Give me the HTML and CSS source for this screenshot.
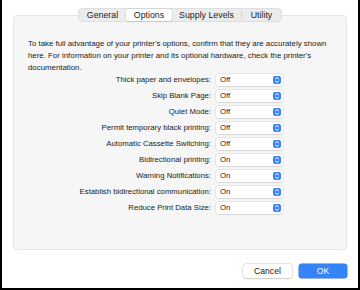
FILE: index.html
```html
<!DOCTYPE html>
<html>
<head>
<meta charset="utf-8">
<link rel="stylesheet" href="styles.css">
</head>
<body>
<div class="window">
  <div class="tabs">
    <div class="tab">General</div>
    <div class="tab active">Options</div>
    <div class="tab">Supply Levels</div>
    <div class="sep"></div>
    <div class="tab">Utility</div>
  </div>
  <div class="panel">
    <p class="intro">To take full advantage of your printer's options, confirm that they are accurately shown<br>here. For information on your printer and its optional hardware, check the printer's<br>documentation.</p>
    <div class="rows">
      <div class="label">Thick paper and envelopes:</div><div class="popup"><span>Off</span><i class="step"></i></div>
      <div class="label">Skip Blank Page:</div><div class="popup"><span>Off</span><i class="step"></i></div>
      <div class="label">Quiet Mode:</div><div class="popup"><span>Off</span><i class="step"></i></div>
      <div class="label">Permit temporary black printing:</div><div class="popup"><span>Off</span><i class="step"></i></div>
      <div class="label">Automatic Cassette Switching:</div><div class="popup"><span>Off</span><i class="step"></i></div>
      <div class="label">Bidirectional printing:</div><div class="popup"><span>On</span><i class="step"></i></div>
      <div class="label">Warning Notifications:</div><div class="popup"><span>On</span><i class="step"></i></div>
      <div class="label">Establish bidirectional communication:</div><div class="popup"><span>On</span><i class="step"></i></div>
      <div class="label">Reduce Print Data Size:</div><div class="popup"><span>On</span><i class="step"></i></div>
    </div>
  </div>
  <div class="buttons">
    <div class="btn">Cancel</div>
    <div class="btn primary">OK</div>
  </div>
</div>
</body>
</html>
```
FILE: styles.css
```css
html, body { margin: 0; padding: 0; background: #fff; }
body { font-family: "Liberation Sans", Arial, sans-serif; color: #1d1d1d; }
.window {
  box-sizing: border-box;
  width: 360px; height: 290px;
  border-left: 2px solid #000;
  border-right: 2px solid #000;
  border-bottom: 2px solid #000;
  padding: 8px 11px 0 11px;
}
.tabs {
  position: relative; z-index: 1;
  margin: 0 auto -7px;
  width: 204px; height: 14px;
  box-sizing: border-box;
  display: flex; align-items: center;
  background: #ececec;
  border: 1px solid #dedede;
  border-radius: 4px;
  font-size: 8.8px;
}
.tab { flex: none; padding: 0 7px; line-height: 12px; color: #222; }
.tab:nth-child(1) { width: 47px; box-sizing: border-box; text-align: center; }
.tab.active {
  width: 46px; box-sizing: border-box; text-align: center;
  background: #fff; border-radius: 3px; height: 12px;
  box-shadow: 0 0 0 0.5px #d0d0d0, 0 0.5px 1px rgba(0,0,0,0.15);
}
.tab:nth-child(3) { width: 69px; box-sizing: border-box; text-align: center; }
.tab:nth-child(5) { flex: 1; text-align: center; padding: 0; }
.sep { width: 1px; height: 8px; background: #cfcfcf; }
.panel {
  box-sizing: border-box;
  height: 235px;
  background: #f6f6f6;
  border: 1px solid #e6e6e6;
  border-radius: 4px;
  padding: 22px 10px 0 14px;
}
.intro {
  margin: 0;
  font-size: 7.85px;
  line-height: 12px;
  color: #222;
  white-space: nowrap;
}
.rows {
  margin-top: 0;
  display: grid;
  grid-template-columns: 183px 67px;
  column-gap: 5px;
  row-gap: 4px;
  font-size: 7.75px;
}
.label { text-align: right; line-height: 12px; color: #222; white-space: nowrap; }
.popup {
  height: 12px; box-sizing: border-box;
  background: #fff; border-radius: 3px;
  box-shadow: 0 0 0 0.5px #d8d8d8, 0 0.5px 1px rgba(0,0,0,0.12);
  display: flex; align-items: center; justify-content: space-between;
  padding: 0 2px 0 4px;
  line-height: 12px; color: #222;
}
.step {
  width: 8px; height: 8px; border-radius: 2px;
  background: #3b82f6; position: relative; display: block;
}
.step::before, .step::after {
  content: ""; position: absolute; left: 2px;
  width: 4px; height: 4px; box-sizing: border-box;
  border-left: 1px solid #fff; border-top: 1px solid #fff;
  transform-origin: center;
}
.step::before { top: 1.3px; transform: scale(0.7) rotate(45deg); }
.step::after { top: 2.7px; transform: scale(0.7) rotate(225deg); }
.buttons {
  display: flex; justify-content: flex-end; gap: 7px;
  margin-top: 14px;
}
.btn {
  box-sizing: border-box;
  height: 14px; line-height: 14px;
  text-align: center; font-size: 8.6px;
  border-radius: 3px;
  background: #fff; color: #222;
  box-shadow: 0 0 0 0.5px #d0d0d0, 0 0.5px 1.5px rgba(0,0,0,0.2);
  width: 49px;
}
.btn.primary {
  width: 48px;
  background: #3483f7; color: #fff;
  box-shadow: 0 0 0 0.5px #2d74e0;
}
```
